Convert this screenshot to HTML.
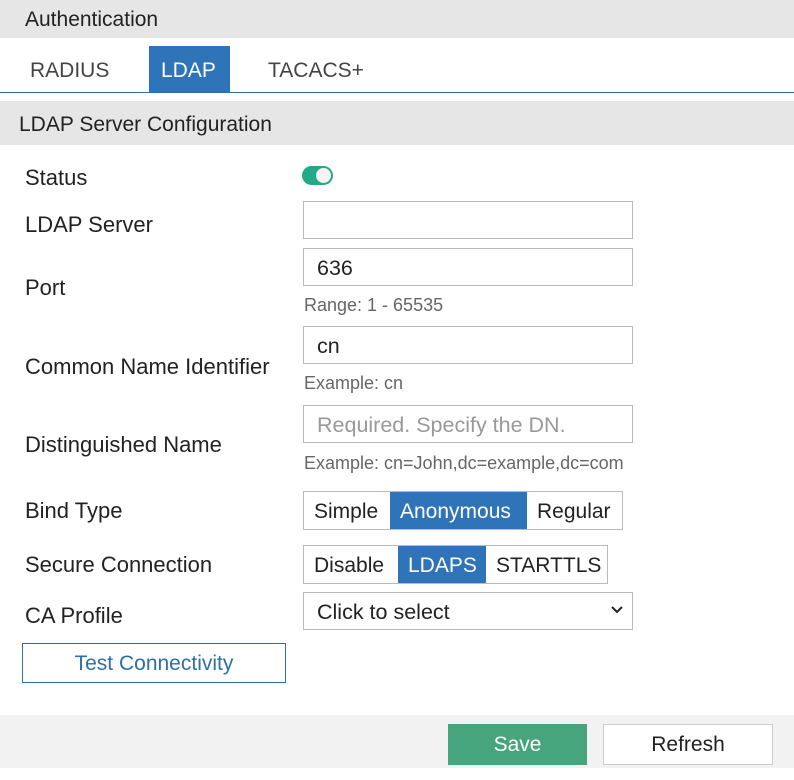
<!DOCTYPE html>
<html><head><meta charset="utf-8"><style>
*{box-sizing:border-box;margin:0;padding:0}
body{width:794px;height:780px;background:#fff;font-family:"Liberation Sans",sans-serif;color:#222;position:relative;overflow:hidden}
.a{position:absolute;white-space:nowrap}
.lbl{font-size:22px;line-height:24px;left:25px}
.inp{position:absolute;left:303px;width:330px;height:38px;border:1px solid #bbb;background:#fff;font-size:21.5px;padding:7px 13px;line-height:24px}
.hint{position:absolute;left:304px;font-size:18px;color:#666;line-height:18px}
.seg{position:absolute;left:303px;height:39px;border:1px solid #bbb;display:flex;background:#fff}
.seg div{font-size:21px;line-height:39px;padding:0 10px;height:37px;overflow:hidden}
.seg .on{background:#2f74b8;color:#fff}
</style></head><body>
<div class="a" style="left:0;top:0;width:794px;height:38px;background:#e6e6e6"></div>
<div class="a" style="left:25px;top:8px;font-size:21px;line-height:24px">Authentication</div>
<div class="a" style="left:149px;top:46px;width:81px;height:46px;background:#2f74b8"></div>
<div class="a" style="left:30px;top:59px;font-size:21px;color:#444">RADIUS</div>
<div class="a" style="left:161px;top:59px;font-size:21px;color:#fff">LDAP</div>
<div class="a" style="left:268px;top:59px;font-size:21px;color:#444">TACACS+</div>
<div class="a" style="left:0;top:92px;width:794px;height:1px;background:#2f6fa5"></div>
<div class="a" style="left:0;top:101px;width:794px;height:44px;background:#e6e6e6"></div>
<div class="a" style="left:19px;top:113px;font-size:21px;line-height:24px">LDAP Server Configuration</div>

<div class="a lbl" style="top:166px">Status</div>
<div class="a" style="left:302px;top:166px;width:31px;height:19px;border-radius:10px;background:#23a987"></div>
<div class="a" style="left:316px;top:168px;width:15px;height:15px;border-radius:50%;background:#f4f4f4"></div>

<div class="a lbl" style="top:213px">LDAP Server</div>
<div class="inp" style="top:201px"></div>

<div class="a lbl" style="top:276px">Port</div>
<div class="inp" style="top:248px">636</div>
<div class="hint" style="top:296px">Range: 1 - 65535</div>

<div class="a lbl" style="top:355px">Common Name Identifier</div>
<div class="inp" style="top:326px">cn</div>
<div class="hint" style="top:374px">Example: cn</div>

<div class="a lbl" style="top:433px">Distinguished Name</div>
<div class="inp" style="top:405px;color:#999">Required. Specify the DN.</div>
<div class="hint" style="top:454px">Example: cn=John,dc=example,dc=com</div>

<div class="a lbl" style="top:499px">Bind Type</div>
<div class="seg" style="top:491px;width:320px"><div style="width:86px">Simple</div><div class="on" style="width:137px">Anonymous</div><div style="width:95px">Regular</div></div>

<div class="a lbl" style="top:553px">Secure Connection</div>
<div class="seg" style="top:545px;width:305px"><div style="width:94px">Disable</div><div class="on" style="width:88px">LDAPS</div><div style="width:121px">STARTTLS</div></div>

<div class="a lbl" style="top:604px">CA Profile</div>
<div class="inp" style="top:592px">Click to select</div>
<svg class="a" style="left:610px;top:604px" width="14" height="12" viewBox="0 0 14 12"><path d="M2 3 L7 8 L12 3" fill="none" stroke="#222" stroke-width="2"/></svg>

<div class="a" style="left:22px;top:643px;width:264px;height:40px;border:1px solid #2f6fa5;color:#2f6fa5;font-size:21px;line-height:40px;text-align:center">Test Connectivity</div>

<div class="a" style="left:0;top:715px;width:794px;height:53px;background:#f2f2f2"></div>
<div class="a" style="left:448px;top:724px;width:139px;height:41px;background:#46a57d;color:#fff;font-size:21px;line-height:41px;text-align:center">Save</div>
<div class="a" style="left:603px;top:724px;width:170px;height:41px;background:#fff;border:1px solid #ccc;font-size:21px;line-height:39px;text-align:center">Refresh</div>
</body></html>
